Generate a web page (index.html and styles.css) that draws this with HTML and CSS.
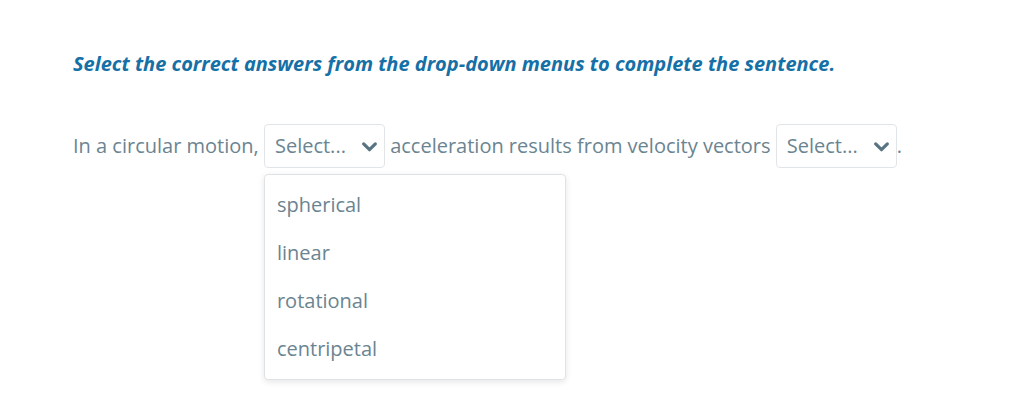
FILE: index.html
```html
<!DOCTYPE html>
<html lang="en">
<head>
    <meta charset="UTF-8">
    <meta name="viewport" content="width=device-width, initial-scale=1.0">
    <title>Drop-down question</title>
    <link rel="stylesheet" href="styles.css">
</head>
<body>
    <div class="question">
        <p class="prompt">Select the correct answers from the drop-down menus to complete the sentence.</p>
        <div class="sentence">
            In a circular motion,
            <div class="choice">
                <div class="select">
                    <span>Select...</span>
                    <svg class="chev" viewBox="0 0 16 16"><path d="M2.5 5.5 L8 11 L13.5 5.5" /></svg>
                </div>
                <div class="menu">
                    <div class="option">spherical</div>
                    <div class="option">linear</div>
                    <div class="option">rotational</div>
                    <div class="option">centripetal</div>
                </div>
            </div>
            acceleration results from velocity vectors
            <div class="choice">
                <div class="select">
                    <span>Select...</span>
                    <svg class="chev" viewBox="0 0 16 16"><path d="M2.5 5.5 L8 11 L13.5 5.5" /></svg>
                </div></div>.
        </div>
    </div>
</body>
</html>
```
FILE: styles.css
```css
html,body{
    margin: 0;
    padding: 0;
    background-color: #fff;
    font-family: "Open Sans", "Noto Sans", sans-serif;
}
body{
    min-height: 408px;
}
.question{
    padding: 50px 0 0 73px;
}
.prompt{
    margin: 0;
    font-size: 20px;
    font-weight: 700;
    font-style: italic;
    color: #1570a6;
    line-height: 28px;
}
.sentence{
    margin: 46px 0 0 0;
    font-size: 20px;
    color: #6b8491;
    line-height: 44px;
}
.choice{
    position: relative;
    display: inline-block;
    vertical-align: top;
}
.select{
    display: flex;
    align-items: center;
    justify-content: space-between;
    box-sizing: border-box;
    width: 121px;
    height: 44px;
    padding: 0 6px 0 10px;
    border: 1px solid #e2e5e7;
    border-radius: 4px;
    color: #6b8491;
}
.chev{
    width: 17px;
    height: 17px;
    fill: none;
    stroke: #587381;
    stroke-width: 3;
    stroke-linecap: round;
    stroke-linejoin: round;
}
.menu{
    position: absolute;
    top: 50px;
    left: 0;
    width: 302px;
    box-sizing: border-box;
    padding: 6px 0;
    background-color: #fff;
    border: 1px solid #e0e3e5;
    border-radius: 4px;
    box-shadow: 0 2px 6px rgba(0,0,0,0.1);
    z-index: 10;
}
.option{
    height: 48px;
    line-height: 48px;
    padding-left: 12px;
    color: #6b8491;
}
```
